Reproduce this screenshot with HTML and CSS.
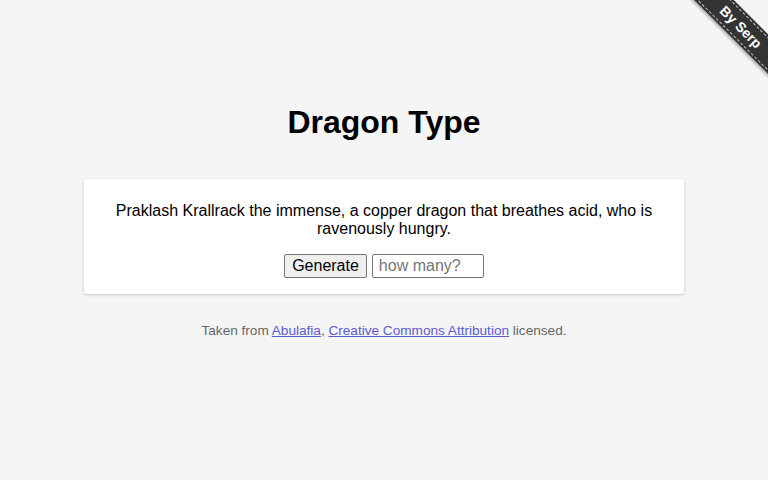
FILE: index.html
```html
<!DOCTYPE html>
<html>
<head>
<meta charset="utf-8">
<link rel="stylesheet" href="styles.css">
</head>
<body>
<div class="ribbon-wrap"><div class="ribbon">By Serp</div></div>
<main class="page">
  <h1 class="title">Dragon Type</h1>
  <section class="card">
    <p class="result">Praklash Krallrack the immense, a copper dragon that breathes acid, who is ravenously hungry.</p>
    <div class="controls">
      <button class="btn">Generate</button>
      <input class="count" type="text" placeholder="how many?">
    </div>
  </section>
  <p class="credit">Taken from <a href="#">Abulafia</a>, <a href="#">Creative Commons Attribution</a> licensed.</p>
</main>
</body>
</html>
```

FILE: styles.css
```css
html, body {
  margin: 0;
  padding: 0;
  background: #f5f5f5;
  font-family: "Liberation Sans", Arial, sans-serif;
  color: #000;
}
.page {
  display: flex;
  flex-direction: column;
  align-items: center;
  padding-top: 104px;
}
.title {
  margin: 0;
  font-size: 32px;
  line-height: 37px;
  font-weight: bold;
}
.card {
  box-sizing: border-box;
  width: 600px;
  margin-top: 38px;
  background: #fff;
  border-radius: 2px;
  box-shadow: 0 1px 3px rgba(0,0,0,0.2);
  padding: 23px 24px 16px;
  text-align: center;
}
.result {
  margin: 0;
  font-size: 16px;
  line-height: 18px;
}
.controls {
  margin-top: 16px;
  display: flex;
  justify-content: center;
  gap: 5px;
}
.btn {
  font-family: "Liberation Sans", Arial, sans-serif;
  font-size: 16px;
  height: 24px;
  padding: 0 7px;
  background: #efefef;
  border: 1px solid #767676;
  border-radius: 2px;
  color: #000;
}
.count {
  font-family: "Liberation Sans", Arial, sans-serif;
  font-size: 16px;
  box-sizing: border-box;
  width: 112px;
  height: 24px;
  padding: 1px 6px;
  border: 1px solid #767676;
  border-radius: 2px;
  background: #fff;
}
.count::placeholder { color: #757575; }
.credit {
  margin: 29px 0 0;
  font-size: 13.6px;
  line-height: 15px;
  color: #666;
}
.credit a { color: #5b5bd6; }
.ribbon-wrap {
  position: absolute;
  top: 0;
  right: 0;
  width: 110px;
  height: 110px;
  overflow: hidden;
}
.ribbon {
  position: absolute;
  left: 3px;
  top: 13px;
  width: 160px;
  height: 28px;
  line-height: 28px;
  background: #333;
  color: #fff;
  font-size: 14px;
  font-weight: bold;
  text-align: center;
  transform: rotate(45deg);
  outline: 1px dashed rgba(255,255,255,0.7);
  outline-offset: -3px;
  box-shadow: 0 2px 3px rgba(0,0,0,0.3);
}
```
